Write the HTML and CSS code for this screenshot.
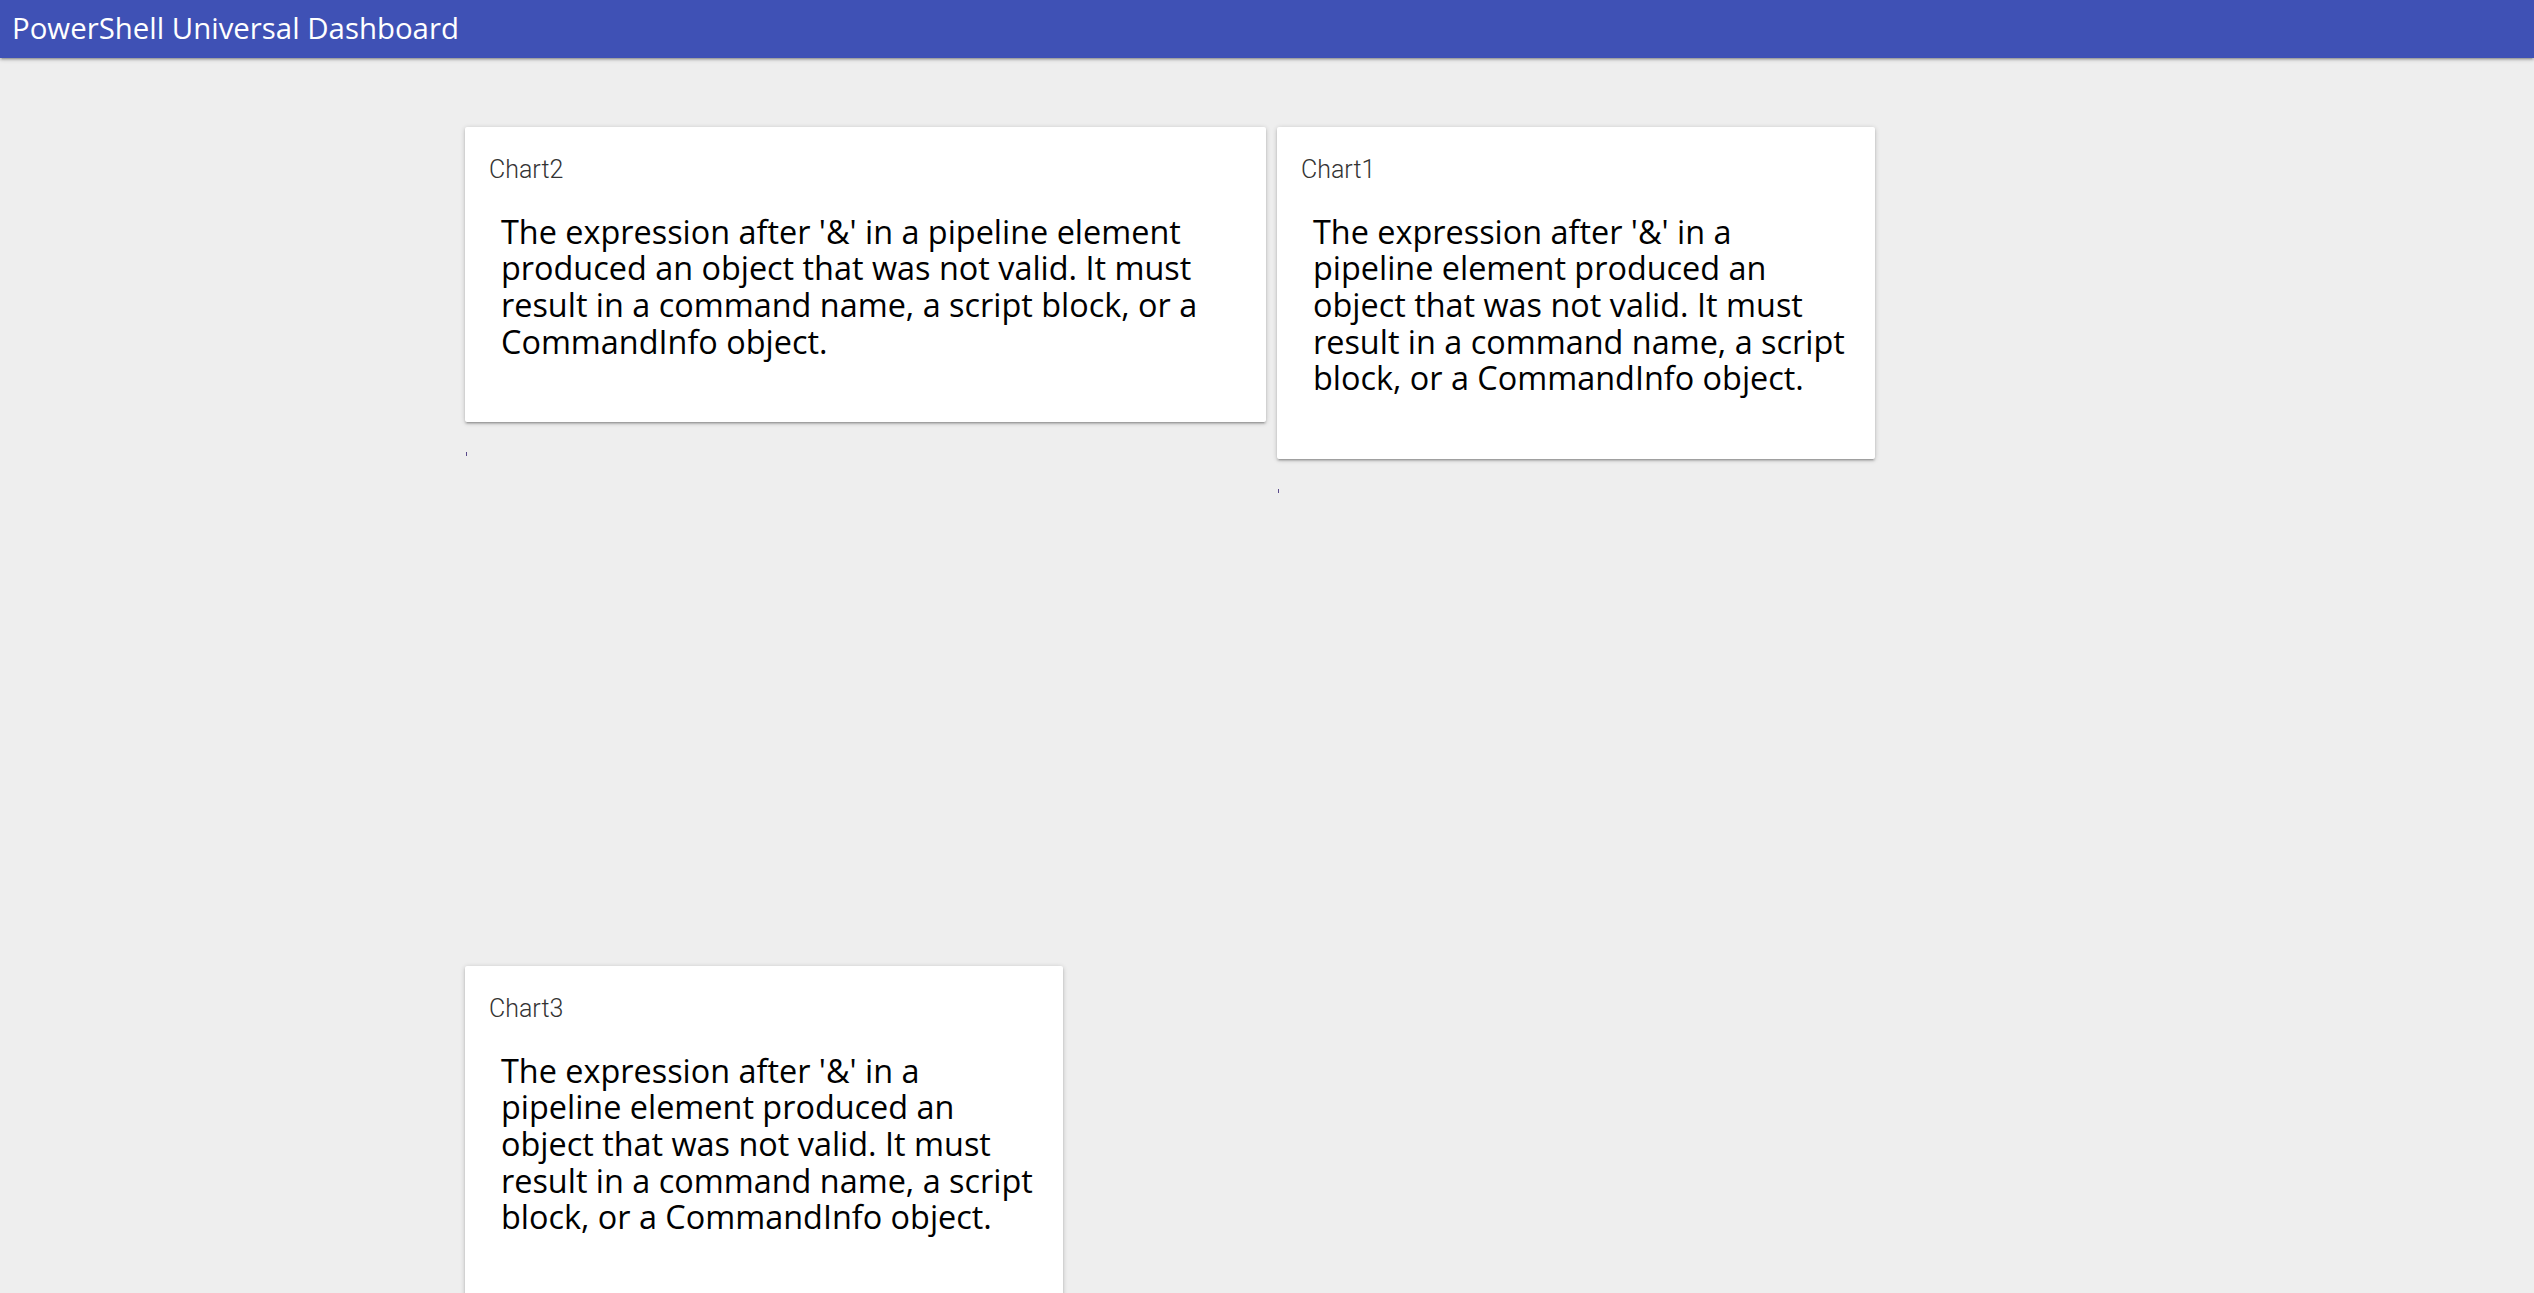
FILE: index.html
```html
<!DOCTYPE html>
<html lang="en">
<head>
<meta charset="utf-8">
<title>PowerShell Universal Dashboard</title>
<link rel="stylesheet" href="styles.css">
</head>
<body>
<header class="nav">
  <span class="brand">PowerShell Universal Dashboard</span>
</header>
<main class="dashboard">
  <div class="grid">
    <div class="cell">
      <div class="card card-wide">
        <div class="card-content">
          <span class="card-title">Chart2</span>
          <p class="error">The expression after '&amp;' in a pipeline element produced an object that was not valid. It must result in a command name, a script block, or a CommandInfo object.</p>
        </div>
      </div>
      <div class="handle"></div>
    </div>
    <div class="cell">
      <div class="card">
        <div class="card-content">
          <span class="card-title">Chart1</span>
          <p class="error">The expression after '&amp;' in a pipeline element produced an object that was not valid. It must result in a command name, a script block, or a CommandInfo object.</p>
        </div>
      </div>
      <div class="handle"></div>
    </div>
    <div class="cell cell-row2">
      <div class="card">
        <div class="card-content">
          <span class="card-title">Chart3</span>
          <p class="error">The expression after '&amp;' in a pipeline element produced an object that was not valid. It must result in a command name, a script block, or a CommandInfo object.</p>
        </div>
      </div>
    </div>
  </div>
</main>
</body>
</html>
```
FILE: styles.css
```css
html, body {
  margin: 0;
  padding: 0;
  height: 100%;
  overflow: hidden;
}
body {
  background: #eeeeee;
  font-family: "Open Sans", "Noto Sans", sans-serif;
  color: #000;
}
.nav {
  height: 58px;
  background: #3f51b5;
  display: flex;
  align-items: center;
  padding-left: 12px;
  box-shadow: 0 2px 2px 0 rgba(0,0,0,0.14), 0 3px 1px -2px rgba(0,0,0,0.12), 0 1px 5px 0 rgba(0,0,0,0.2);
  position: relative;
  z-index: 1;
}
.brand {
  color: #fff;
  font-size: 29.4px;
  line-height: 58px;
  white-space: nowrap;
  position: relative;
  top: -1px;
}
.dashboard {
  padding: 69px 0 0 465px;
}
.grid {
  display: grid;
  grid-template-columns: 801px 598px;
  grid-template-rows: 829px auto;
  column-gap: 11px;
  row-gap: 10px;
}
.cell {
  display: flex;
  flex-direction: column;
  align-items: flex-start;
}
.cell-row2 {
  grid-column: 1;
}
.card {
  width: 598px;
  background: #fff;
  border-radius: 2px;
  box-shadow: 0 2px 2px 0 rgba(0,0,0,0.14), 0 3px 1px -2px rgba(0,0,0,0.12), 0 1px 5px 0 rgba(0,0,0,0.2);
  box-sizing: border-box;
}
.card-wide {
  width: 801px;
}
.card-content {
  padding: 26.5px 24px 24px 24px;
}
.card-title {
  display: block;
  font-family: "Roboto", "Open Sans", sans-serif;
  font-size: 25px;
  line-height: 32px;
  font-weight: 300;
  color: #333;
}
.error {
  margin: 27px 0 38.7px 12px;
  font-size: 32.4px;
  line-height: 36.7px;
  font-weight: 400;
  color: #000;
}
.handle {
  width: 1px;
  height: 4px;
  margin: 30px 0 0 1px;
  background: #5a4a8a;
}
```
